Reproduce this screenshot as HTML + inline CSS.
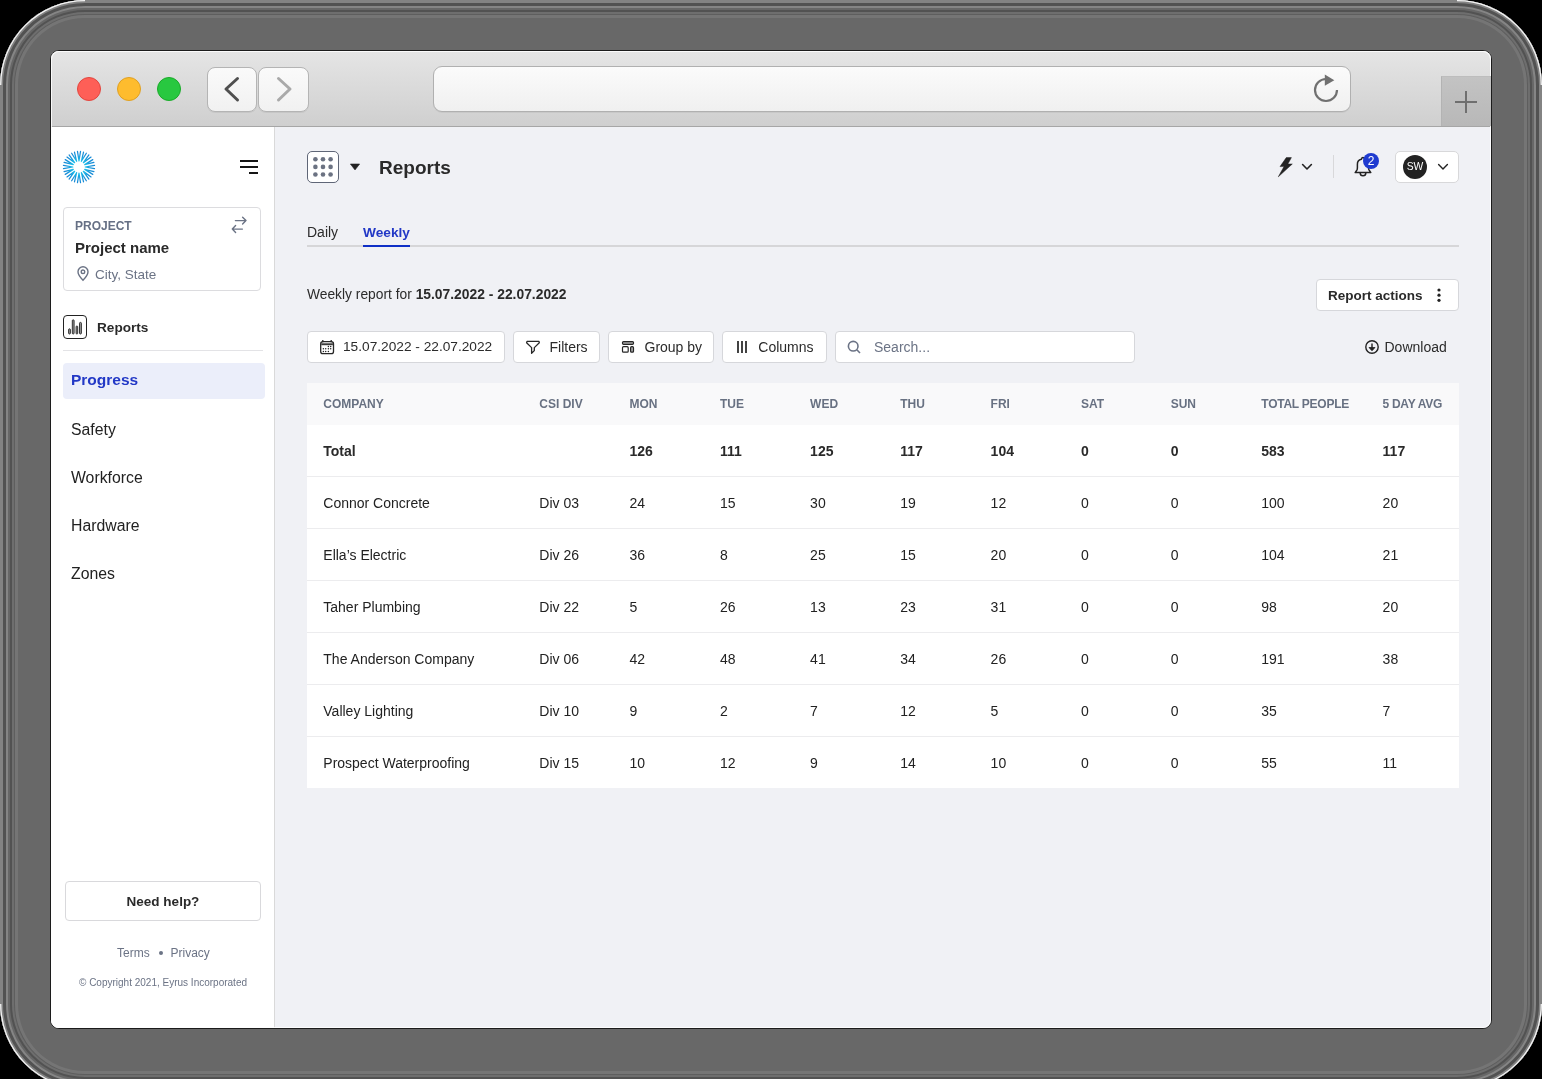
<!DOCTYPE html>
<html><head><meta charset="utf-8">
<style>
*{box-sizing:border-box;margin:0;padding:0}
html,body{width:1542px;height:1079px;overflow:hidden;background:#000}
body{position:relative;font-family:"Liberation Sans",sans-serif;color:#222;-webkit-font-smoothing:antialiased}
#root{position:absolute;left:0;top:0;width:1542px;height:1079px;will-change:transform}
#frame{position:absolute;left:0;top:0;width:1542px;height:1089px;border-radius:85px;background:#686868;
  box-shadow:inset 0 0 0 3px #838383,inset 0 0 0 6px #525252,inset 0 0 0 8px #858585,inset 0 0 0 10px #676767,inset 0 0 0 12px #525252,inset 0 0 0 14px #6e6e6e,inset 0 0 0 15px #5e5e5e,inset 0 0 0 18px #757575}
#hl{position:absolute;left:51px;top:51px;width:1440px;height:977px;border-radius:8px;box-shadow:inset 0 0 0 1px rgba(255,255,255,.85);pointer-events:none}
#win{position:absolute;left:50px;top:50px;width:1442px;height:979px;border:1px solid #1c1c1c;border-radius:9px;overflow:hidden;background:#f0f1f5}
#tb{position:absolute;left:0;top:0;width:1440px;height:76px;background:linear-gradient(#e5e5e5,#cfcfcf);border-bottom:1px solid #a6a6a6}
#side{position:absolute;left:0;top:76px;width:224px;height:901px;background:#fff;border-right:1px solid #d9d9d9}
.t{position:absolute;white-space:nowrap;line-height:1}
.b{font-weight:700;color:#2a2a2a}
.g{color:#687182}
.box{position:absolute;background:#fff;border:1px solid #d6d7db;border-radius:4px}
.hd{font-size:12px;font-weight:700;color:#687182}
.rl{position:absolute;left:307px;width:1152px;height:1px;background:#ececee}
svg{position:absolute;overflow:visible}
</style></head><body>
<div id="root">
<div id="frame"></div>
<svg style="left:0;top:0" width="1542" height="1079"><g fill="none" stroke="#f4f4f4" stroke-width="1.3">
<path d="M0.7 85A84.3 84.3 0 0 1 85 0.7"/>
<path d="M1457 0.7A84.3 84.3 0 0 1 1541.3 85"/>
<path d="M0.7 1004A84.3 84.3 0 0 0 85 1088.3"/>
<path d="M1541.3 1004A84.3 84.3 0 0 1 1457 1088.3"/>
</g></svg>

<div id="win">
  <div id="tb"></div>
  <div id="side"></div>
</div>
<div id="hl"></div>

<div style="position:absolute;left:77px;top:77px;width:24px;height:24px;border-radius:50%;background:#fe5f57;border:1px solid #e2463f"></div>
<div style="position:absolute;left:117px;top:77px;width:24px;height:24px;border-radius:50%;background:#febc2e;border:1px solid #dfa023"></div>
<div style="position:absolute;left:157px;top:77px;width:24px;height:24px;border-radius:50%;background:#28c840;border:1px solid #1aab29"></div>
<div style="position:absolute;left:207px;top:67px;width:50px;height:45px;border-radius:8px;background:linear-gradient(#fafafa,#f1f1f1);border:1px solid #b4b4b4;box-shadow:0 1px 0 rgba(0,0,0,.06)"></div>
<div style="position:absolute;left:258px;top:67px;width:51px;height:45px;border-radius:8px;background:linear-gradient(#fafafa,#f1f1f1);border:1px solid #b4b4b4;box-shadow:0 1px 0 rgba(0,0,0,.06)"></div>
<svg style="left:0;top:0" width="1542" height="130">
 <polyline points="237.5,78.5 226,89 237.5,100" fill="none" stroke="#4f4f4f" stroke-width="3" stroke-linecap="round" stroke-linejoin="round"/>
 <polyline points="278.5,78.5 290,89 278.5,100" fill="none" stroke="#a9a9a9" stroke-width="3" stroke-linecap="round" stroke-linejoin="round"/>
</svg>
<div style="position:absolute;left:433px;top:66px;width:918px;height:46px;border-radius:9px;background:linear-gradient(#fbfbfb,#f0f0f0);border:1px solid #b0b0b0;box-shadow:0 1px 0 rgba(0,0,0,.05)"></div>
<svg style="left:0;top:0" width="1542" height="130">
 <path d="M1337 90A11 11 0 1 1 1326 79" fill="none" stroke="#707070" stroke-width="2.2"/>
 <polygon points="1324.8,74.6 1334.3,80.2 1324.8,85.8" fill="#707070"/>
</svg>
<div style="position:absolute;left:1441px;top:76px;width:50px;height:50px;background:linear-gradient(#c3c3c3,#b8b8b8);border-top:1px solid #bdbdbd;border-left:1px solid #b3b3b3"></div>
<svg style="left:0;top:0" width="1542" height="130">
 <path d="M1455 102 H1477 M1466 91 V113" stroke="#6f6f6f" stroke-width="2"/>
</svg>

<svg style="left:0;top:0" width="300" height="200"><defs><radialGradient id="lg" cx="79" cy="167" r="16" gradientUnits="userSpaceOnUse"><stop offset="0.4" stop-color="#1dbde9"/><stop offset="0.75" stop-color="#1793d9"/><stop offset="1" stop-color="#1a8ad6"/></radialGradient></defs><path d="M77.48 151.47L79.00 160.80L80.52 151.47M83.53 152.07L81.37 161.27L86.35 153.24M88.90 154.95L83.38 162.62L91.05 157.10M92.76 159.65L84.73 164.63L93.93 162.47M94.53 165.48L85.20 167.00L94.53 168.52M93.93 171.53L84.73 169.37L92.76 174.35M91.05 176.90L83.38 171.38L88.90 179.05M86.35 180.76L81.37 172.73L83.53 181.93M80.52 182.53L79.00 173.20L77.48 182.53M74.47 181.93L76.63 172.73L71.65 180.76M69.10 179.05L74.62 171.38L66.95 176.90M65.24 174.35L73.27 169.37L64.07 171.53M63.47 168.52L72.80 167.00L63.47 165.48M64.07 162.47L73.27 164.63L65.24 159.65M66.95 157.10L74.62 162.62L69.10 154.95M71.65 153.24L76.63 161.27L74.47 152.07" fill="none" stroke="url(#lg)" stroke-width="1.25" stroke-linecap="round" stroke-linejoin="round"/></svg>
<svg style="left:0;top:0" width="300" height="200"><path d="M240 161H258M240 167H258M249 173H258" stroke="#151515" stroke-width="2"/></svg>
<div class="box" style="left:63px;top:207px;width:198px;height:84px;border-color:#dcdcdf"></div>
<div class="t b g" style="left:75px;top:219.7px;font-size:12px;color:#667085">PROJECT</div>
<svg style="left:0;top:0" width="300" height="300"><g fill="none" stroke="#6b7385" stroke-width="1.4" stroke-linecap="round" stroke-linejoin="round"><path d="M235.4 220.6H246M242.6 217.2L246 220.6L242.6 224"/><path d="M242.4 229.1H232.3M235.6 225.6L232.3 229.1L235.6 232.5"/></g></svg>
<div class="t b" style="left:75px;top:239.8px;font-size:15px">Project name</div>
<svg style="left:0;top:0" width="300" height="300"><g fill="none" stroke="#6b7385" stroke-width="1.4"><path d="M83 280.3C83 280.3 88 275.2 88 271.8A5 5 0 0 0 78 271.8C78 275.2 83 280.3 83 280.3Z"/><circle cx="83" cy="271.8" r="1.8"/></g></svg>
<div class="t g" style="left:95px;top:267.7px;font-size:13.5px;color:#6b7385">City, State</div>
<div style="position:absolute;left:63px;top:315px;width:24px;height:24px;border:1.5px solid #222;border-radius:4px"></div>
<svg style="left:0;top:0" width="300" height="400"><g fill="#999" stroke="#222" stroke-width="0.9"><rect x="68.6" y="328.8" width="1.8" height="5.2" rx="0.9"/><rect x="72.3" y="319.8" width="1.8" height="14.2" rx="0.9"/><rect x="76.1" y="326" width="1.6" height="8" rx="0.8"/><rect x="79.5" y="322.4" width="1.9" height="11.6" rx="0.9"/></g></svg>
<div class="t b" style="left:97px;top:320.5px;font-size:13.6px">Reports</div>
<div style="position:absolute;left:63px;top:350px;width:200px;height:1px;background:#e3e3e6"></div>
<div style="position:absolute;left:63px;top:363px;width:202px;height:36px;border-radius:4px;background:#ebeefa"></div>
<div class="t b" style="left:71px;top:372.3px;font-size:15.5px;color:#2238c6">Progress</div>
<div class="t" style="left:71px;top:421.5px;font-size:15.8px">Safety</div>
<div class="t" style="left:71px;top:469.5px;font-size:15.8px">Workforce</div>
<div class="t" style="left:71px;top:517.5px;font-size:15.8px">Hardware</div>
<div class="t" style="left:71px;top:565.5px;font-size:15.8px">Zones</div>
<div class="box" style="left:65px;top:881px;width:196px;height:40px;border-color:#d9d9dc"></div>
<div class="t b" style="left:65px;width:196px;text-align:center;top:894.6px;font-size:13.5px">Need help?</div>
<div class="t g" style="left:117px;top:946.7px;font-size:12px;color:#6b7385">Terms</div>
<div style="position:absolute;left:158.5px;top:951px;width:4px;height:4px;border-radius:50%;background:#6b7385"></div>
<div class="t g" style="left:170.5px;top:946.7px;font-size:12px;color:#6b7385">Privacy</div>
<div class="t g" style="left:79px;top:978px;font-size:10px;color:#6b7385">© Copyright 2021, Eyrus Incorporated</div>


<div style="position:absolute;left:307px;top:151px;width:32px;height:32px;border:1.5px solid #5f6677;border-radius:5px;background:#fff"></div>
<svg style="left:0;top:0" width="600" height="200"><g fill="#6b7282"><circle cx="315.4" cy="159.3" r="2.3"/><circle cx="323" cy="159.3" r="2.3"/><circle cx="330.6" cy="159.3" r="2.3"/><circle cx="315.4" cy="166.9" r="2.3"/><circle cx="323" cy="166.9" r="2.3"/><circle cx="330.6" cy="166.9" r="2.3"/><circle cx="315.4" cy="174.5" r="2.3"/><circle cx="323" cy="174.5" r="2.3"/><circle cx="330.6" cy="174.5" r="2.3"/></g>
<path d="M350.4 164H359.6L355 169.9Z" fill="#222" stroke="#222" stroke-width="0.6" stroke-linejoin="round"/></svg>
<div class="t b" style="left:379px;top:157.7px;font-size:19px;color:#2a2a2a">Reports</div>
<div class="t" style="left:307px;top:225.3px;font-size:14px;color:#2b2b2b">Daily</div>
<div class="t b" style="left:363px;top:225.5px;font-size:13.7px;color:#2238c6">Weekly</div>
<div style="position:absolute;left:307px;top:245px;width:1152px;height:2px;background:#d6d6d8"></div>
<div style="position:absolute;left:363px;top:245px;width:47px;height:2px;background:#0f2fc6"></div>
<svg style="left:0;top:0" width="1542" height="200"><path d="M1286.3 157.6H1291.4L1287.9 164H1292.3L1278.3 176.8L1284 166.6H1280Z" fill="#222" stroke="#222" stroke-width="0.5" stroke-linejoin="round"/>
<polyline points="1302.6,164.5 1307,169 1311.4,164.5" fill="none" stroke="#222" stroke-width="1.6" stroke-linecap="round" stroke-linejoin="round"/>
<rect x="1333" y="155" width="1" height="23" fill="#d8d8da"/>
<path d="M1355.2 172.6H1370.8L1369 169.8Q1368.6 169 1368.6 167.5V164.5A5.2 5.2 0 0 0 1364.6 159.2Q1364.2 157.6 1363 157.6Q1361.8 157.6 1361.4 159.2A5.2 5.2 0 0 0 1357.4 164.5V167.5Q1357.4 169 1357 169.8Z" fill="none" stroke="#222" stroke-width="1.5" stroke-linejoin="round"/>
<path d="M1360.2 173A2.8 2.8 0 0 0 1365.8 173" fill="none" stroke="#222" stroke-width="1.5"/>
<circle cx="1371" cy="161" r="8" fill="#1f3bd0"/>
</svg>
<div class="t" style="left:1363px;top:155.3px;width:16px;text-align:center;font-size:12px;color:#fff">2</div>
<div class="box" style="left:1395px;top:151px;width:64px;height:32px;border-color:#d8d8da;border-radius:5px"></div>
<div style="position:absolute;left:1403px;top:155px;width:24px;height:24px;border-radius:50%;background:#222"></div>
<div class="t" style="left:1403px;top:162px;width:24px;text-align:center;font-size:10.3px;color:#fff">SW</div>
<svg style="left:0;top:0" width="1542" height="200"><polyline points="1438.6,164.6 1443,169 1447.4,164.6" fill="none" stroke="#222" stroke-width="1.4" stroke-linecap="round" stroke-linejoin="round"/></svg>
<div class="t" style="left:307px;top:288.2px;font-size:13.8px;color:#2b2b2b">Weekly report for <b style="font-size:13.85px">15.07.2022 - 22.07.2022</b></div>
<div class="box" style="left:1316px;top:279px;width:143px;height:32px"></div>
<div class="t b" style="left:1328px;top:288.6px;font-size:13.5px">Report actions</div>
<svg style="left:0;top:0" width="1542" height="400"><g fill="#222"><circle cx="1439" cy="290" r="1.6"/><circle cx="1439" cy="295.2" r="1.6"/><circle cx="1439" cy="300.3" r="1.6"/></g></svg>
<div class="box" style="left:307px;top:331px;width:198px;height:32px"></div>
<div class="box" style="left:513px;top:331px;width:87px;height:32px"></div>
<div class="box" style="left:608px;top:331px;width:106px;height:32px"></div>
<div class="box" style="left:722px;top:331px;width:105px;height:32px"></div>
<div class="box" style="left:835px;top:331px;width:300px;height:32px"></div>
<div class="t" style="left:343px;top:340.4px;font-size:13.7px;color:#2b2b2b">15.07.2022 - 22.07.2022</div>
<div class="t" style="left:549.5px;top:340.4px;font-size:14px;color:#2b2b2b">Filters</div>
<div class="t" style="left:644.5px;top:340.4px;font-size:14px;color:#2b2b2b">Group by</div>
<div class="t" style="left:758.3px;top:340.4px;font-size:14px;color:#2b2b2b">Columns</div>
<div class="t" style="left:874px;top:340.4px;font-size:14px;color:#6b7385">Search...</div>
<div class="t" style="left:1384.5px;top:340.2px;font-size:14px;color:#2b2b2b">Download</div>
<svg style="left:0;top:0" width="1542" height="400">
<g fill="none" stroke="#262626" stroke-width="1.3">
 <rect x="320.7" y="341.7" width="12.8" height="12" rx="2.2"/>
 <path d="M322.8 340V342.3M331.2 340V342.3"/>
</g>
<rect x="321.3" y="343.3" width="11.6" height="1.9" fill="#3a3a3a"/>
<g fill="#262626"><circle cx="328.4" cy="346.5" r="0.75"/><circle cx="330.7" cy="346.5" r="0.75"/><circle cx="323.4" cy="348.7" r="0.75"/><circle cx="325.7" cy="348.7" r="0.75"/><circle cx="328.4" cy="348.7" r="0.75"/><circle cx="330.7" cy="348.7" r="0.75"/><circle cx="323.4" cy="351.4" r="0.75"/><circle cx="325.7" cy="351.4" r="0.75"/><circle cx="328.4" cy="351.4" r="0.75"/></g>
<path d="M527 341.3H539L539.3 342.8L534.3 347.6V350.6L531.6 353.3V347.6L526.6 342.8Z" fill="none" stroke="#262626" stroke-width="1.3" stroke-linejoin="round"/>
<g stroke="#262626" stroke-width="1.2"><rect x="622.5" y="341.6" width="11" height="2.7" rx="1" fill="#a8a8a8"/><rect x="622.5" y="346.7" width="5.7" height="5.5" rx="1" fill="none"/><rect x="630.6" y="346.7" width="2.9" height="5.5" rx="1" fill="#a8a8a8"/></g>
<path d="M738 341V353M742 341V353M746 341V353" stroke="#3a3a3a" stroke-width="1.9"/>
<g fill="none" stroke="#6b7385" stroke-width="1.6"><circle cx="853.2" cy="346.2" r="4.8"/><path d="M856.8 349.8L860 353"/></g>
<g fill="none" stroke="#222" stroke-width="1.4"><circle cx="1372" cy="347" r="6.2"/><path d="M1372 343.5V350"/></g>
<path d="M1369 347.5L1372 350.8L1375 347.5Z" fill="#222" stroke="#222" stroke-width="0.8" stroke-linejoin="round"/>
</svg>

<div style="position:absolute;left:307px;top:383px;width:1152px;height:405px;background:#fff"></div>
<div style="position:absolute;left:307px;top:383px;width:1152px;height:42px;background:#f9f9fa"></div>
<div class="t hd" style="left:323.3px;top:398.1px">COMPANY</div><div class="t hd" style="left:539.3px;top:398.1px">CSI DIV</div><div class="t hd" style="left:629.4px;top:398.1px">MON</div><div class="t hd" style="left:720.0px;top:398.1px">TUE</div><div class="t hd" style="left:810.1px;top:398.1px">WED</div><div class="t hd" style="left:900.2px;top:398.1px">THU</div><div class="t hd" style="left:990.6px;top:398.1px">FRI</div><div class="t hd" style="left:1080.9px;top:398.1px">SAT</div><div class="t hd" style="left:1170.7px;top:398.1px">SUN</div><div class="t hd" style="left:1261.3px;top:398.1px;letter-spacing:-0.25px">TOTAL PEOPLE</div><div class="t hd" style="left:1382.6px;top:398.1px;letter-spacing:-0.3px">5 DAY AVG</div>
<div class="t b" style="left:323.3px;top:444.2px;font-size:14px">Total</div><div class="t b" style="left:629.4px;top:444.2px;font-size:14px">126</div><div class="t b" style="left:720.0px;top:444.2px;font-size:14px">111</div><div class="t b" style="left:810.1px;top:444.2px;font-size:14px">125</div><div class="t b" style="left:900.2px;top:444.2px;font-size:14px">117</div><div class="t b" style="left:990.6px;top:444.2px;font-size:14px">104</div><div class="t b" style="left:1080.9px;top:444.2px;font-size:14px">0</div><div class="t b" style="left:1170.7px;top:444.2px;font-size:14px">0</div><div class="t b" style="left:1261.3px;top:444.2px;font-size:14px">583</div><div class="t b" style="left:1382.6px;top:444.2px;font-size:14px">117</div>
<div class="rl" style="top:476px"></div><div class="t" style="left:323.3px;top:496.2px;font-size:14px">Connor Concrete</div><div class="t" style="left:539.3px;top:496.2px;font-size:14px">Div 03</div><div class="t" style="left:629.4px;top:496.2px;font-size:14px">24</div><div class="t" style="left:720.0px;top:496.2px;font-size:14px">15</div><div class="t" style="left:810.1px;top:496.2px;font-size:14px">30</div><div class="t" style="left:900.2px;top:496.2px;font-size:14px">19</div><div class="t" style="left:990.6px;top:496.2px;font-size:14px">12</div><div class="t" style="left:1080.9px;top:496.2px;font-size:14px">0</div><div class="t" style="left:1170.7px;top:496.2px;font-size:14px">0</div><div class="t" style="left:1261.3px;top:496.2px;font-size:14px">100</div><div class="t" style="left:1382.6px;top:496.2px;font-size:14px">20</div>
<div class="rl" style="top:528px"></div><div class="t" style="left:323.3px;top:548.2px;font-size:14px">Ella’s Electric</div><div class="t" style="left:539.3px;top:548.2px;font-size:14px">Div 26</div><div class="t" style="left:629.4px;top:548.2px;font-size:14px">36</div><div class="t" style="left:720.0px;top:548.2px;font-size:14px">8</div><div class="t" style="left:810.1px;top:548.2px;font-size:14px">25</div><div class="t" style="left:900.2px;top:548.2px;font-size:14px">15</div><div class="t" style="left:990.6px;top:548.2px;font-size:14px">20</div><div class="t" style="left:1080.9px;top:548.2px;font-size:14px">0</div><div class="t" style="left:1170.7px;top:548.2px;font-size:14px">0</div><div class="t" style="left:1261.3px;top:548.2px;font-size:14px">104</div><div class="t" style="left:1382.6px;top:548.2px;font-size:14px">21</div>
<div class="rl" style="top:580px"></div><div class="t" style="left:323.3px;top:600.2px;font-size:14px">Taher Plumbing</div><div class="t" style="left:539.3px;top:600.2px;font-size:14px">Div 22</div><div class="t" style="left:629.4px;top:600.2px;font-size:14px">5</div><div class="t" style="left:720.0px;top:600.2px;font-size:14px">26</div><div class="t" style="left:810.1px;top:600.2px;font-size:14px">13</div><div class="t" style="left:900.2px;top:600.2px;font-size:14px">23</div><div class="t" style="left:990.6px;top:600.2px;font-size:14px">31</div><div class="t" style="left:1080.9px;top:600.2px;font-size:14px">0</div><div class="t" style="left:1170.7px;top:600.2px;font-size:14px">0</div><div class="t" style="left:1261.3px;top:600.2px;font-size:14px">98</div><div class="t" style="left:1382.6px;top:600.2px;font-size:14px">20</div>
<div class="rl" style="top:632px"></div><div class="t" style="left:323.3px;top:652.2px;font-size:14px">The Anderson Company</div><div class="t" style="left:539.3px;top:652.2px;font-size:14px">Div 06</div><div class="t" style="left:629.4px;top:652.2px;font-size:14px">42</div><div class="t" style="left:720.0px;top:652.2px;font-size:14px">48</div><div class="t" style="left:810.1px;top:652.2px;font-size:14px">41</div><div class="t" style="left:900.2px;top:652.2px;font-size:14px">34</div><div class="t" style="left:990.6px;top:652.2px;font-size:14px">26</div><div class="t" style="left:1080.9px;top:652.2px;font-size:14px">0</div><div class="t" style="left:1170.7px;top:652.2px;font-size:14px">0</div><div class="t" style="left:1261.3px;top:652.2px;font-size:14px">191</div><div class="t" style="left:1382.6px;top:652.2px;font-size:14px">38</div>
<div class="rl" style="top:684px"></div><div class="t" style="left:323.3px;top:704.2px;font-size:14px">Valley Lighting</div><div class="t" style="left:539.3px;top:704.2px;font-size:14px">Div 10</div><div class="t" style="left:629.4px;top:704.2px;font-size:14px">9</div><div class="t" style="left:720.0px;top:704.2px;font-size:14px">2</div><div class="t" style="left:810.1px;top:704.2px;font-size:14px">7</div><div class="t" style="left:900.2px;top:704.2px;font-size:14px">12</div><div class="t" style="left:990.6px;top:704.2px;font-size:14px">5</div><div class="t" style="left:1080.9px;top:704.2px;font-size:14px">0</div><div class="t" style="left:1170.7px;top:704.2px;font-size:14px">0</div><div class="t" style="left:1261.3px;top:704.2px;font-size:14px">35</div><div class="t" style="left:1382.6px;top:704.2px;font-size:14px">7</div>
<div class="rl" style="top:736px"></div><div class="t" style="left:323.3px;top:756.2px;font-size:14px">Prospect Waterproofing</div><div class="t" style="left:539.3px;top:756.2px;font-size:14px">Div 15</div><div class="t" style="left:629.4px;top:756.2px;font-size:14px">10</div><div class="t" style="left:720.0px;top:756.2px;font-size:14px">12</div><div class="t" style="left:810.1px;top:756.2px;font-size:14px">9</div><div class="t" style="left:900.2px;top:756.2px;font-size:14px">14</div><div class="t" style="left:990.6px;top:756.2px;font-size:14px">10</div><div class="t" style="left:1080.9px;top:756.2px;font-size:14px">0</div><div class="t" style="left:1170.7px;top:756.2px;font-size:14px">0</div><div class="t" style="left:1261.3px;top:756.2px;font-size:14px">55</div><div class="t" style="left:1382.6px;top:756.2px;font-size:14px">11</div>

</div>
</body></html>
